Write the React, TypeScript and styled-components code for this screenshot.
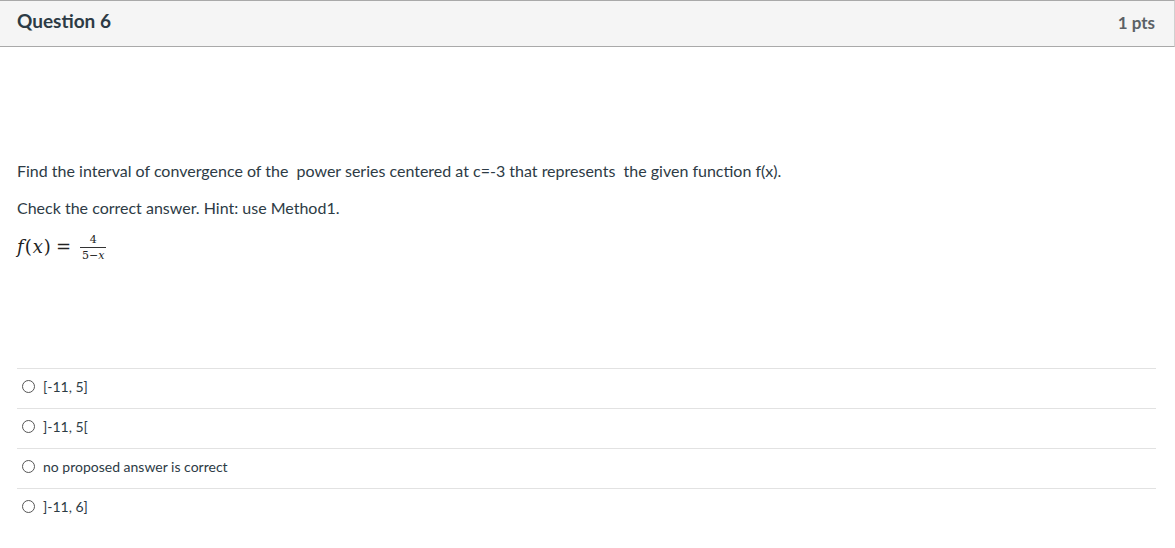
import * as React from 'react'
import styled, { createGlobalStyle } from 'styled-components'

const GlobalStyle = createGlobalStyle`
  html, body {
    margin: 0;
    padding: 0;
    background: #fff;
  }
  body {
    font-family: Lato, "Open Sans", sans-serif;
    color: #2d3b45;
  }
`

const answers = ['[-11, 5]', ']-11, 5[', 'no proposed answer is correct', ']-11, 6]']

const App: React.FC = () => {
  return (
    <>
      <GlobalStyle />
      <Panel>
        <Header>
          <Title>Question 6</Title>
          <Points>1 pts</Points>
        </Header>
        <Body>
          <Text>
            Find the interval of convergence of the&nbsp; power series centered at c=-3 that represents&nbsp; the given
            function f(x).
          </Text>
          <Text>Check the correct answer. Hint: use Method1.</Text>
          <MathLine>
            <Var>f</Var>
            <Paren>(</Paren>
            <Var>x</Var>
            <Paren>)</Paren>
            <Equals>=</Equals>
            <Fraction>
              <Numerator>4</Numerator>
              <Denominator>
                5−<Var>x</Var>
              </Denominator>
            </Fraction>
          </MathLine>
          <Answers>
            {answers.map(a => (
              <AnswerRow key={a}>
                <Radio />
                <AnswerLabel>{a}</AnswerLabel>
              </AnswerRow>
            ))}
          </Answers>
        </Body>
      </Panel>
    </>
  )
}
export default App

const Panel = styled.div`
  width: 1175px;
  height: 548px;
  overflow: hidden;
`
const Header = styled.div`
  display: flex;
  justify-content: space-between;
  align-items: baseline;
  box-sizing: border-box;
  height: 47px;
  padding: 8px 19px 0 17px;
  background: #f5f5f5;
  border-top: 1px solid #a9a9a9;
  border-bottom: 1px solid #a9a9a9;
  border-right: 1px solid #d0d0d0;
`
const Title = styled.h2`
  margin: 0;
  font-size: 19px;
  line-height: 24px;
  font-weight: 700;
  color: #2d3b45;
`
const Points = styled.div`
  font-size: 17px;
  font-weight: 700;
  color: #5b6166;
  position: relative;
  top: 1px;
`
const Body = styled.div`
  padding: 113px 19px 0 17px;
`
const Text = styled.p`
  margin: 0 0 16px;
  font-size: 16px;
  line-height: 21px;
`
const MathLine = styled.div`
  display: flex;
  align-items: center;
  height: 24px;
  font-family: "DejaVu Serif", "Liberation Serif", serif;
  font-size: 18px;
  color: #222;
`
const Var = styled.span`
  font-style: italic;
`
const Paren = styled.span`
  margin: 0 1px;
`
const Equals = styled.span`
  margin: 0 7px 0 4px;
`
const Fraction = styled.span`
  display: inline-flex;
  flex-direction: column;
  align-items: center;
  font-size: 11px;
  line-height: 11px;
  margin-left: 2px;
  position: relative;
  top: 1px;
`
const Numerator = styled.span`
  padding: 0 2px 2px;
`
const Denominator = styled.span`
  border-top: 1px solid #333;
  padding: 2px 2px 0;
`
const Answers = styled.div`
  margin-top: 110px;
`
const AnswerRow = styled.div`
  display: flex;
  align-items: center;
  gap: 8px;
  padding: 0 0 4px 5px;
  box-sizing: border-box;
  height: 40px;
  border-top: 1px solid #e2e2e2;
`
const Radio = styled.span`
  width: 11px;
  height: 11px;
  border: 1px solid #555;
  border-radius: 50%;
  background: #fff;
`
const AnswerLabel = styled.span`
  font-size: 14px;
  color: #2d3b45;
`
